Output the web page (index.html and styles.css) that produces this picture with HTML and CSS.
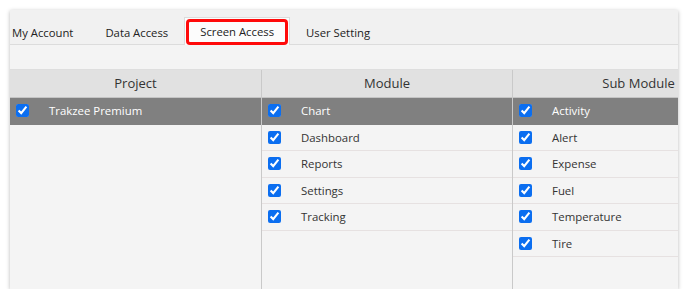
FILE: index.html
```html
<!DOCTYPE html>
<html>
<head>
<meta charset="utf-8">
<link rel="stylesheet" href="styles.css">
</head>
<body>
<div class="panel">
  <div class="tabs">
    <div class="tab first">My Account</div>
    <div class="tab">Data Access</div>
    <div class="tab active">Screen Access<span class="mark"></span></div>
    <div class="tab">User Setting</div>
  </div>
  <div class="strip"></div>
  <div class="grid">
    <div class="col">
      <div class="head">Project</div>
      <label class="row sel"><input type="checkbox" checked><span>Trakzee Premium</span></label>
    </div>
    <div class="col">
      <div class="head">Module</div>
      <label class="row sel"><input type="checkbox" checked><span>Chart</span></label>
      <label class="row"><input type="checkbox" checked><span>Dashboard</span></label>
      <label class="row"><input type="checkbox" checked><span>Reports</span></label>
      <label class="row"><input type="checkbox" checked><span>Settings</span></label>
      <label class="row"><input type="checkbox" checked><span>Tracking</span></label>
    </div>
    <div class="col">
      <div class="head">Sub Module</div>
      <label class="row sel"><input type="checkbox" checked><span>Activity</span></label>
      <label class="row"><input type="checkbox" checked><span>Alert</span></label>
      <label class="row"><input type="checkbox" checked><span>Expense</span></label>
      <label class="row"><input type="checkbox" checked><span>Fuel</span></label>
      <label class="row"><input type="checkbox" checked><span>Temperature</span></label>
      <label class="row"><input type="checkbox" checked><span>Tire</span></label>
    </div>
  </div>
</div>
</body>
</html>
```

FILE: styles.css
```css
html, body {
  margin: 0;
  padding: 0;
  background: #ffffff;
}
body {
  padding: 10px 0 0 10px;
  font-family: "Open Sans", "DejaVu Sans", sans-serif;
  color: #333;
}
.panel {
  width: 668px;
  height: 279px;
  background: #f4f4f4;
  box-shadow: 0 1px 4px rgba(0, 0, 0, 0.28);
  overflow: hidden;
  display: flex;
  flex-direction: column;
}
.tabs {
  display: flex;
  align-items: flex-end;
  height: 34px;
  background: #f1f1f1;
  border-bottom: 1px solid #dcdcdc;
  flex: none;
}
.tab {
  position: relative;
  height: 27px;
  line-height: 27px;
  padding: 0 15px;
  border: 1px solid transparent;
  border-bottom: none;
  font-size: 11.3px;
  color: #222;
  box-sizing: border-box;
  margin-bottom: -1px;
}
.tab.first {
  padding-left: 1px;
}
.tab.active {
  background: #fcfcfc;
  border-color: #dcdcdc;
  height: 28px;
}
.mark {
  position: absolute;
  left: 1px;
  top: 1px;
  right: 1px;
  bottom: 0px;
  border: 3px solid #ff0a0a;
  border-radius: 4px;
}
.strip {
  height: 24px;
  flex: none;
  background: #f4f4f4;
  border-bottom: 1px solid #dedede;
}
.grid {
  display: grid;
  grid-template-columns: 252px 251px 252px;
  flex: 1;
}
.col {
  border-right: 1px solid #c9c9c9;
  display: flex;
  flex-direction: column;
}
.head {
  height: 28px;
  line-height: 27px;
  text-align: center;
  font-size: 13px;
  background: #e1e1e1;
  color: #333;
  border-bottom: 1px solid #c4c4c4;
  box-sizing: border-box;
}
.row {
  display: flex;
  align-items: center;
  height: 26.5px;
  box-sizing: border-box;
  border-bottom: 1px solid #e6e1e1;
  font-size: 11.4px;
  color: #333;
}
.row input {
  margin: 0 0 0 6px;
  width: 13px;
  height: 13px;
  accent-color: #0b6ef0;
}
.row span {
  margin-left: 20px;
}
.row.sel {
  background: #808080;
  color: #fff;
  border-bottom-color: #808080;
}
```
